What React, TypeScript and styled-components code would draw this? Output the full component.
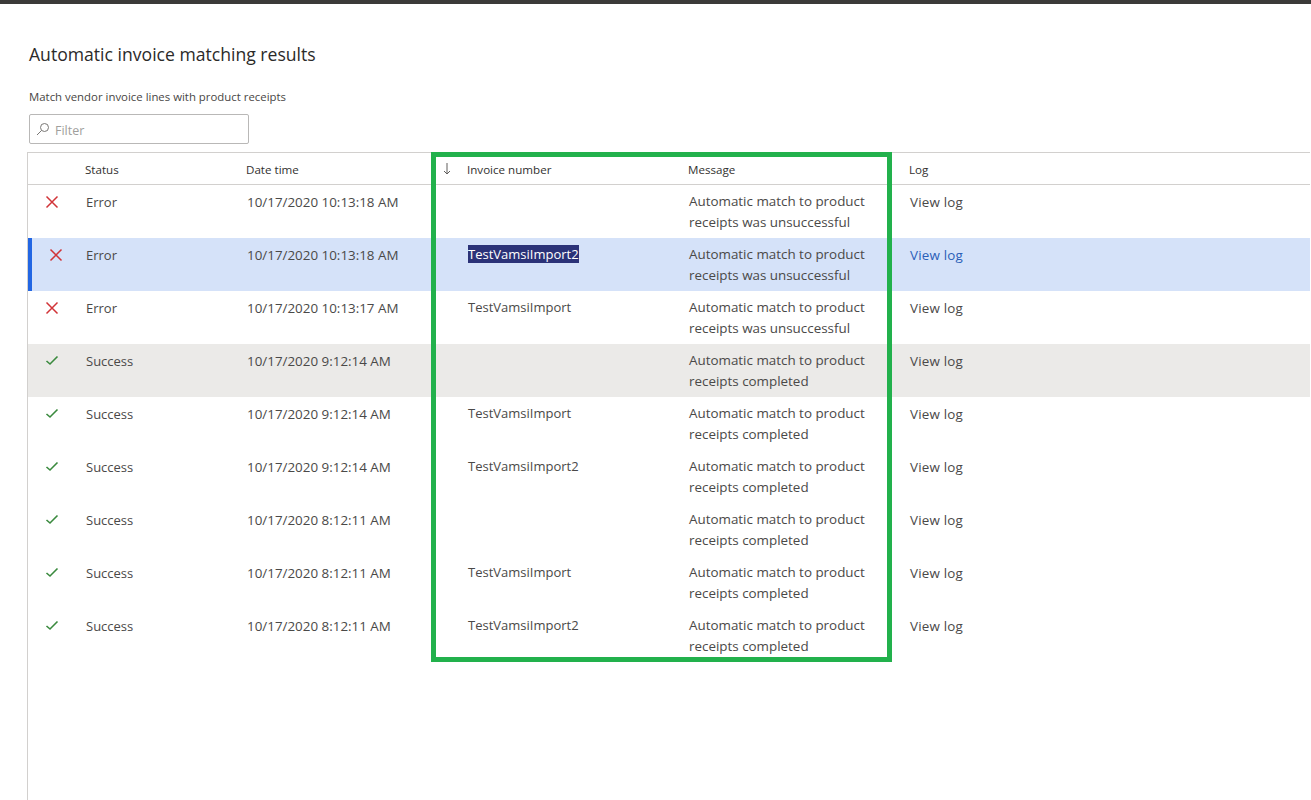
import * as React from 'react';
import styled, { createGlobalStyle } from 'styled-components';

const GlobalStyle = createGlobalStyle`
  html, body {
    margin: 0;
    padding: 0;
    background: #fff;
    font-family: "Open Sans", "Noto Sans", "Liberation Sans", sans-serif;
    color: #323130;
  }
`;

const Page = styled.div`
  position: relative;
  height: 800px;
  overflow: hidden;
`;

const TopBar = styled.div`
  height: 4px;
  background: #3b3a39;
`;

const Content = styled.div`
  padding: 39px 1px 0 27px;
`;

const Title = styled.h1`
  margin: 0 0 0 2px;
  font-size: 17.6px;
  line-height: 23px;
  font-weight: 500;
  color: #2b2a29;
`;

const Description = styled.div`
  margin: 23px 0 0 2px;
  font-size: 11.4px;
  line-height: 16px;
  color: #484644;
`;

const FilterBox = styled.div`
  display: flex;
  align-items: center;
  gap: 5px;
  box-sizing: border-box;
  width: 220px;
  height: 30px;
  margin: 9px 0 0 2px;
  padding: 0 0 0 6px;
  border: 1px solid #b9b8b7;
  border-radius: 2px;
  font-size: 12.5px;
  color: #a19f9d;
`;

const FilterText = styled.span`
  margin-top: 3px;
`;

const Grid = styled.div`
  margin-top: 8px;
  border-left: 1px solid #d2d0ce;
  border-top: 1px solid #d2d0ce;
  height: 647px;
`;

const columns = '57px 161px 221px 221px 221px 1fr';

const HeaderRow = styled.div`
  display: grid;
  grid-template-columns: ${columns};
  height: 31px;
  border-bottom: 1px solid #d2d0ce;
`;

const HeaderCell = styled.div`
  display: flex;
  align-items: center;
  padding-top: 2px;
  font-size: 11.6px;
  font-weight: 500;
  color: #323130;
`;

const SortCell = styled(HeaderCell)`
  position: relative;
`;

const SortIcon = styled.svg`
  position: absolute;
  left: -24px;
  top: 10px;
`;

const Row = styled.div<{ $variant?: 'selected' | 'hover' }>`
  display: grid;
  grid-template-columns: ${columns};
  height: 53px;
  box-sizing: border-box;
  padding-top: 6px;
  font-size: 13.4px;
  line-height: 21px;
  color: #4a4948;
  background: ${(p) =>
    p.$variant === 'selected'
      ? '#d5e2f9'
      : p.$variant === 'hover'
      ? '#ebeae8'
      : '#fff'};
  box-shadow: ${(p) =>
    p.$variant === 'selected' ? 'inset 4px 0 0 #2266e3' : 'none'};
`;

const IconCell = styled.div<{ $shift?: boolean }>`
  display: flex;
  padding: 4px 0 0 ${(p) => (p.$shift ? '21px' : '17px')};
`;

const Cell = styled.div`
  padding-left: 1px;
`;

const StatusCell = styled(Cell)`
  margin-top: 1px;
  font-size: 13px;
`;

const DateCell = styled(Cell)`
  margin-top: 1px;
`;

const InvoiceCell = styled(Cell)`
  font-size: 13px;
`;

const Selected = styled.span`
  background: #2b3278;
  color: #fff;
`;

const LogLink = styled.div<{ $active?: boolean }>`
  padding-left: 1px;
  margin-top: 1px;
  font-size: 13.4px;
  letter-spacing: 0.2px;
  color: ${(p) => (p.$active ? '#2b5fb8' : '#4a4948')};
`;

const Callout = styled.div`
  position: absolute;
  left: 431px;
  top: 152px;
  width: 461px;
  height: 510px;
  box-sizing: border-box;
  border: 5px solid #22b14c;
`;

type RowData = {
  ok: boolean;
  date: string;
  invoice?: string;
};

const rows: RowData[] = [
  { ok: false, date: '10/17/2020 10:13:18 AM' },
  { ok: false, date: '10/17/2020 10:13:18 AM', invoice: 'TestVamsiImport2' },
  { ok: false, date: '10/17/2020 10:13:17 AM', invoice: 'TestVamsiImport' },
  { ok: true, date: '10/17/2020 9:12:14 AM' },
  { ok: true, date: '10/17/2020 9:12:14 AM', invoice: 'TestVamsiImport' },
  { ok: true, date: '10/17/2020 9:12:14 AM', invoice: 'TestVamsiImport2' },
  { ok: true, date: '10/17/2020 8:12:11 AM' },
  { ok: true, date: '10/17/2020 8:12:11 AM', invoice: 'TestVamsiImport' },
  { ok: true, date: '10/17/2020 8:12:11 AM', invoice: 'TestVamsiImport2' }
];

function StatusIcon({ ok }: { ok: boolean }) {
  if (ok) {
    return (
      <svg width="14" height="12" viewBox="0 0 14 12" fill="none">
        <path d="M1.5 7 L5 10 L12.5 2.5" stroke="#3a8a3e" strokeWidth="1.6" />
      </svg>
    );
  }

  return (
    <svg width="14" height="14" viewBox="0 0 14 14" fill="none">
      <path d="M1.5 1.5 L12.5 12.5 M12.5 1.5 L1.5 12.5" stroke="#d13438" strokeWidth="1.5" />
    </svg>
  );
}

function renderRow(row: RowData, index: number) {
  const selected = index === 1;
  const variant = selected ? 'selected' : index === 3 ? 'hover' : undefined;

  return (
    <Row key={index} $variant={variant}>
      <IconCell $shift={selected}>
        <StatusIcon ok={row.ok} />
      </IconCell>
      <StatusCell>{row.ok ? 'Success' : 'Error'}</StatusCell>
      <DateCell>{row.date}</DateCell>
      <InvoiceCell>
        {selected ? <Selected>{row.invoice}</Selected> : row.invoice}
      </InvoiceCell>
      <Cell>
        Automatic match to product
        <br />
        {row.ok ? 'receipts completed' : 'receipts was unsuccessful'}
      </Cell>
      <LogLink $active={selected}>View log</LogLink>
    </Row>
  );
}

export default function App() {
  return (
    <Page>
      <GlobalStyle />
      <TopBar />
      <Content>
        <Title>Automatic invoice matching results</Title>
        <Description>Match vendor invoice lines with product receipts</Description>
        <FilterBox>
          <svg width="14" height="14" viewBox="0 0 14 14" fill="none">
            <circle cx="8.5" cy="5.5" r="4" stroke="#797775" />
            <path d="M5.5 8.5 L1 13" stroke="#797775" />
          </svg>
          <FilterText>Filter</FilterText>
        </FilterBox>
        <Grid>
          <HeaderRow>
            <div />
            <HeaderCell>Status</HeaderCell>
            <HeaderCell>Date time</HeaderCell>
            <SortCell>
              <SortIcon width="8" height="12" viewBox="0 0 8 12" fill="none">
                <path d="M4 0 V11 M1 8 L4 11 L7 8" stroke="#605e5c" />
              </SortIcon>
              Invoice number
            </SortCell>
            <HeaderCell>Message</HeaderCell>
            <HeaderCell>Log</HeaderCell>
          </HeaderRow>
          {rows.map(renderRow)}
        </Grid>
      </Content>
      <Callout />
    </Page>
  );
}
